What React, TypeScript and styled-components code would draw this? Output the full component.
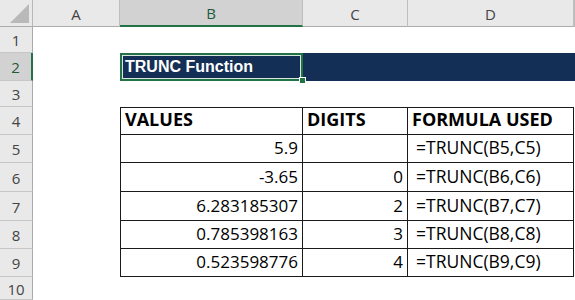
import styled, { createGlobalStyle } from "styled-components";

const GlobalStyle = createGlobalStyle`
  html, body {
    margin: 0;
    padding: 0;
    background: #ffffff;
  }
  * {
    box-sizing: border-box;
  }
`;

const columns = ["A", "B", "C", "D"];

const rows = [
  { values: "5.9", digits: "", formula: "=TRUNC(B5,C5)" },
  { values: "-3.65", digits: "0", formula: "=TRUNC(B6,C6)" },
  { values: "6.283185307", digits: "2", formula: "=TRUNC(B7,C7)" },
  { values: "0.785398163", digits: "3", formula: "=TRUNC(B8,C8)" },
  { values: "0.523598776", digits: "4", formula: "=TRUNC(B9,C9)" },
];

export default function App() {
  return (
    <>
      <GlobalStyle />
      <Sheet>
        <Corner>
          <CornerTriangle />
        </Corner>
        {columns.map((col) => (
          <ColHeader key={col} $selected={col === "B"}>
            {col}
          </ColHeader>
        ))}
        <ColHeader />

        <RowHeader>1</RowHeader>
        <Blank />
        <Blank />
        <Blank />
        <Blank />
        <Blank />

        <RowHeader $selected>2</RowHeader>
        <Blank />
        <TitleBand>
          <Selection>
            TRUNC Function
            <FillHandle />
          </Selection>
        </TitleBand>

        <RowHeader>3</RowHeader>
        <Blank />
        <Blank />
        <Blank />
        <Blank />
        <Blank />

        <RowHeader>4</RowHeader>
        <Blank />
        <Cell $bold $top $left>
          VALUES
        </Cell>
        <Cell $bold $top>
          DIGITS
        </Cell>
        <Cell $bold $top>
          FORMULA USED
        </Cell>
        <Blank />

        {rows.map((row, i) => (
          <Row key={i}>
            <RowHeader>{i + 5}</RowHeader>
            <Blank />
            <Cell $left $align="right">
              {row.values}
            </Cell>
            <Cell $align="right">{row.digits}</Cell>
            <Cell $indent>{row.formula}</Cell>
            <Blank />
          </Row>
        ))}

        <RowHeader>10</RowHeader>
        <Blank />
        <Blank />
        <Blank />
        <Blank />
        <Blank />
      </Sheet>
    </>
  );
}

const Sheet = styled.div`
  display: grid;
  grid-template-columns: 33px 87px 183px 105px 166px 1fr;
  grid-template-rows: 27px 26px 28px 26px 28px 28px 29px 29px 28px 28px 1fr;
  width: 575px;
  height: 300px;
  overflow: hidden;
  background: #ffffff;
`;

const Row = styled.div`
  display: contents;
`;

const Corner = styled.div`
  position: relative;
  background: #e9e9e9;
  border-right: 1px solid #b8b8b8;
  border-bottom: 1px solid #ababab;
`;

const CornerTriangle = styled.div`
  position: absolute;
  right: 3px;
  bottom: 3px;
  width: 0;
  height: 0;
  border-left: 19px solid transparent;
  border-bottom: 19px solid #b9b9b9;
`;

const ColHeader = styled.div<{ $selected?: boolean }>`
  display: flex;
  align-items: flex-end;
  justify-content: center;
  padding-bottom: 2px;
  background: ${(p) => (p.$selected ? "#d2d2d2" : "#e9e9e9")};
  border-right: 1px solid #bdbdbd;
  border-bottom: ${(p) => (p.$selected ? "2px solid #217346" : "1px solid #ababab")};
  color: ${(p) => (p.$selected ? "#1f5a3a" : "#444444")};
  font-family: "Open Sans", sans-serif;
  font-size: 15px;
`;

const RowHeader = styled.div<{ $selected?: boolean }>`
  display: flex;
  align-items: center;
  justify-content: center;
  padding-top: 1px;
  background: ${(p) => (p.$selected ? "#d2d2d2" : "#e9e9e9")};
  border-right: ${(p) => (p.$selected ? "2px solid #217346" : "1px solid #ababab")};
  border-bottom: 1px solid #c6c6c6;
  color: ${(p) => (p.$selected ? "#1f5a3a" : "#444444")};
  font-family: "Open Sans", sans-serif;
  font-size: 15px;
`;

const Blank = styled.div`
  background: #ffffff;
`;

const TitleBand = styled.div`
  grid-column: span 4;
  display: flex;
  background: #142f56;
`;

const Selection = styled.div`
  position: relative;
  width: 183px;
  display: flex;
  align-items: center;
  padding-left: 3px;
  border: 2px solid #217346;
  box-shadow: inset 0 0 0 1px #d9e6de;
  color: #ffffff;
  font-family: "Liberation Sans", Arial, sans-serif;
  font-weight: bold;
  font-size: 16px;
`;

const FillHandle = styled.div`
  position: absolute;
  right: -5px;
  bottom: -5px;
  width: 7px;
  height: 7px;
  background: #217346;
  border: 1px solid #ffffff;
`;

const Cell = styled.div<{
  $bold?: boolean;
  $top?: boolean;
  $left?: boolean;
  $indent?: boolean;
  $align?: "left" | "right";
}>`
  display: flex;
  align-items: flex-end;
  justify-content: ${(p) => (p.$align === "right" ? "flex-end" : "flex-start")};
  padding: 0 4px 3px ${(p) => (p.$indent ? "8px" : "4px")};
  background: #ffffff;
  border-right: 1px solid #1a1a1a;
  border-bottom: 1px solid #1a1a1a;
  border-top: ${(p) => (p.$top ? "1px solid #1a1a1a" : "none")};
  border-left: ${(p) => (p.$left ? "1px solid #1a1a1a" : "none")};
  color: #000000;
  font-family: "Open Sans", sans-serif;
  font-size: ${(p) => (p.$bold ? "18px" : p.$indent ? "17.5px" : "17px")};
  font-weight: ${(p) => (p.$bold ? 700 : 400)};
  white-space: nowrap;
`;
